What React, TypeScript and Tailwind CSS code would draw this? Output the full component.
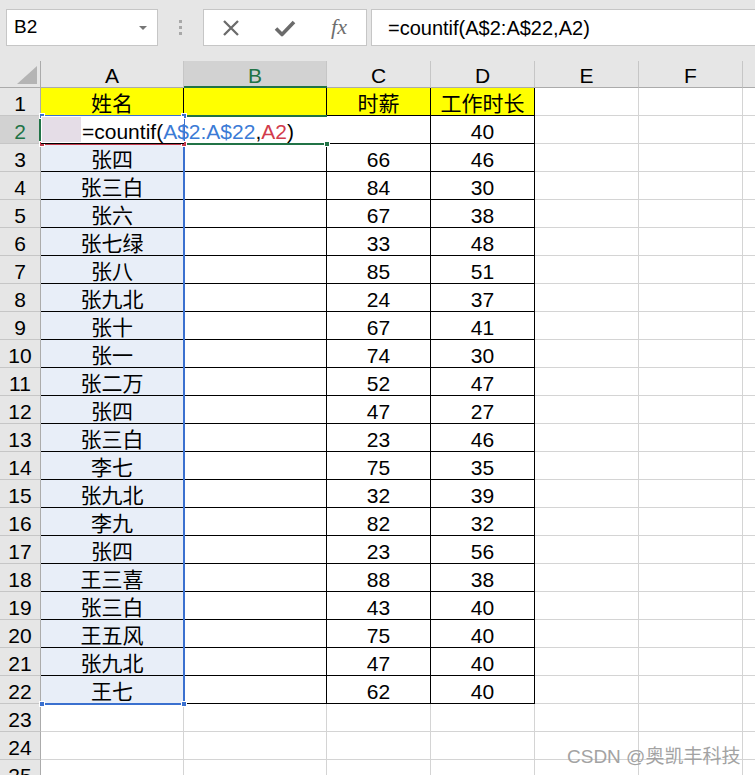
const cols = ['A', 'B', 'C', 'D', 'E', 'F', 'G'];

// rows 3..22: name, hourly wage, hours
const data: [string, number, number][] = [
  ['张四', 66, 46],
  ['张三白', 84, 30],
  ['张六', 67, 38],
  ['张七绿', 33, 48],
  ['张八', 85, 51],
  ['张九北', 24, 37],
  ['张十', 67, 41],
  ['张一', 74, 30],
  ['张二万', 52, 47],
  ['张四', 47, 27],
  ['张三白', 23, 46],
  ['李七', 75, 35],
  ['张九北', 32, 39],
  ['李九', 82, 32],
  ['张四', 23, 56],
  ['王三喜', 88, 38],
  ['张三白', 43, 40],
  ['王五风', 75, 40],
  ['张九北', 47, 40],
  ['王七', 62, 40],
];

const rowNums = Array.from({ length: 25 }, (_, i) => i + 1);

const cellValue = (r: number, c: number): string => {
  if (r === 1) return ['姓名', '', '时薪', '工作时长'][c] ?? '';
  if (r === 2) return c === 3 ? '40' : '';
  if (r >= 3 && r <= 22) {
    const row = data[r - 3];
    if (c === 0) return row[0];
    if (c === 2) return String(row[1]);
    if (c === 3) return String(row[2]);
  }
  return '';
};

const cellClass = (r: number, c: number) => {
  const inTable = r <= 22 && c <= 3;
  let border = inTable ? 'border-r border-b border-black' : 'border-r border-b border-[#d4d4d4]';
  if (r === 2 && c <= 1) border = 'border-b border-black';
  let bg = 'bg-white';
  if (r === 1 && c <= 3) bg = 'bg-[#ffff00]';
  else if (r >= 3 && r <= 22 && c === 0) bg = 'bg-[#e8eef8]';
  return `h-[28px] flex items-center justify-center pt-[4px] ${border} ${bg}`;
};

const Handle = ({ color, className }: { color: string; className: string }) => (
  <div className={`absolute w-[6px] h-[6px] border border-white ${color} ${className}`} />
);

const FormulaText = () => (
  <span>
    =countif(<span className="text-[#3b7bd6]">A$2:A$22</span>,<span className="text-[#d23b4c]">A2</span>)
  </span>
);

export default function App() {
  return (
    <div className="relative w-[755px] h-[775px] overflow-hidden bg-white font-['Liberation_Sans','Noto_Sans_CJK_SC',sans-serif] text-black">
      {/* Toolbar: name box + formula bar */}
      <div className="h-[61px] bg-[#e6e6e6] flex items-start pt-[9px]">
        <div className="ml-[6px] w-[152px] h-[37px] bg-white border border-[#c6c6c6] flex items-center justify-between pl-[7px] pr-[10px]">
          <span className="text-[19px]">B2</span>
          <span className="w-0 h-0 border-l-[4px] border-r-[4px] border-t-[4px] border-l-transparent border-r-transparent border-t-[#767676]" />
        </div>
        <div className="w-[45px] h-[37px] flex flex-col items-center justify-center gap-[3px]">
          <span className="w-[3px] h-[3px] bg-[#a8a8a8]" />
          <span className="w-[3px] h-[3px] bg-[#a8a8a8]" />
          <span className="w-[3px] h-[3px] bg-[#a8a8a8]" />
        </div>
        <div className="w-[164px] h-[37px] bg-white border border-[#c6c6c6] flex items-center">
          <div className="flex-1 flex justify-center">
            <svg width="18" height="16" viewBox="0 0 18 16">
              <path d="M2 1L16 15M16 1L2 15" stroke="#6b6b6b" strokeWidth="2.3" fill="none" />
            </svg>
          </div>
          <div className="flex-1 flex justify-center">
            <svg width="22" height="18" viewBox="0 0 22 18">
              <path d="M2 9.5L8 15.5L20 3" stroke="#6b6b6b" strokeWidth="3.6" fill="none" strokeLinejoin="round" />
            </svg>
          </div>
          <div className="flex-1 flex justify-center">
            <span className="font-['Liberation_Serif'] italic text-[22px] leading-none text-[#6e6e6e] -mt-[2px]">fx</span>
          </div>
        </div>
        <div className="ml-[4px] flex-1 h-[37px] bg-white border border-[#c6c6c6] border-r-0 flex items-center pl-[16px] text-[20px]">
          =countif(A$2:A$22,A2)
        </div>
      </div>

      {/* Sheet grid */}
      <div className="relative">
        <div className="grid grid-cols-[41px_143px_143px_104px_104px_104px_104px_104px] text-[21px] leading-none">
          {/* column header row */}
          <div className="h-[27px] bg-[#e6e6e6] border-r border-b border-[#ababab] relative">
            <svg className="absolute left-[17px] top-[5px]" width="21" height="19" viewBox="0 0 21 19">
              <path d="M20 0L20 18L0 18Z" fill="#b4b4b4" />
            </svg>
          </div>
          {cols.map((c) => (
            <div
              key={c}
              className={
                c === 'B'
                  ? 'h-[27px] bg-[#d2d2d2] text-[#217346] border-r border-r-[#c6c6c6] border-b border-b-[#ababab] flex items-center justify-center pt-[2px]'
                  : 'h-[27px] bg-[#e6e6e6] border-r border-r-[#c6c6c6] border-b border-b-[#ababab] flex items-center justify-center pt-[2px]'
              }
            >
              {c}
            </div>
          ))}

          {rowNums.map((r) => (
            <>
              <div
                key={`h${r}`}
                className={
                  r === 2
                    ? 'h-[28px] bg-[#d2d2d2] text-[#217346] border-r border-r-[#ababab] border-b border-b-[#c6c6c6] flex items-center justify-center pt-[4px]'
                    : 'h-[28px] bg-[#e6e6e6] border-r border-r-[#ababab] border-b border-b-[#c6c6c6] flex items-center justify-center pt-[4px]'
                }
              >
                {r}
              </div>
              {cols.map((_, c) =>
                r === 2 && c === 0 ? (
                  <div key={`${r}-${c}`} className="h-[28px] border-b border-black bg-white flex items-center pl-[1px] whitespace-nowrap overflow-visible relative z-10">
                    <span className="w-[39px] h-[25px] bg-[#e5dde7] shrink-0" />
                    <span className="ml-[1px] pt-[3px]">
                      <FormulaText />
                    </span>
                  </div>
                ) : (
                  <div key={`${r}-${c}`} className={cellClass(r, c)}>
                    {cellValue(r, c)}
                  </div>
                ),
              )}
            </>
          ))}
        </div>

        {/* selection overlays */}
        <div className="absolute left-[184px] top-[25px] w-[143px] h-[2px] bg-[#217346]" />
        <div className="absolute left-[39px] top-[55px] w-[2px] h-[28px] bg-[#217346]" />
        <div className="absolute left-[41px] top-[54px] w-[143px] h-[2px] bg-[#3a70cf]" />
        <div className="absolute left-[183px] top-[54px] w-[2px] h-[590px] bg-[#3a70cf]" />
        <div className="absolute left-[41px] top-[642px] w-[144px] h-[2px] bg-[#3a70cf]" />
        <div className="absolute left-[41px] top-[82px] w-[143px] h-[2px] bg-[#c33b4d]" />
        <div className="absolute left-[185px] top-[54px] w-[142px] h-[2px] bg-[#217346]" />
        <div className="absolute left-[185px] top-[82px] w-[142px] h-[2px] bg-[#217346]" />
        <Handle color="bg-[#3a70cf]" className="left-[39px] top-[52px]" />
        <Handle color="bg-[#3a70cf]" className="left-[181px] top-[52px]" />
        <Handle color="bg-[#3a70cf]" className="left-[181px] top-[640px]" />
        <Handle color="bg-[#3a70cf]" className="left-[39px] top-[640px]" />
        <Handle color="bg-[#c33b4d]" className="left-[39px] top-[80px]" />
        <Handle color="bg-[#c33b4d]" className="left-[181px] top-[80px]" />
        <Handle color="bg-[#217346]" className="left-[324px] top-[80px]" />
      </div>

      {/* watermark */}
      <div className="absolute left-[567px] top-[743px] text-[19px] text-[#a3a3a3] whitespace-nowrap">
        CSDN @奥凯丰科技
      </div>
    </div>
  );
}
